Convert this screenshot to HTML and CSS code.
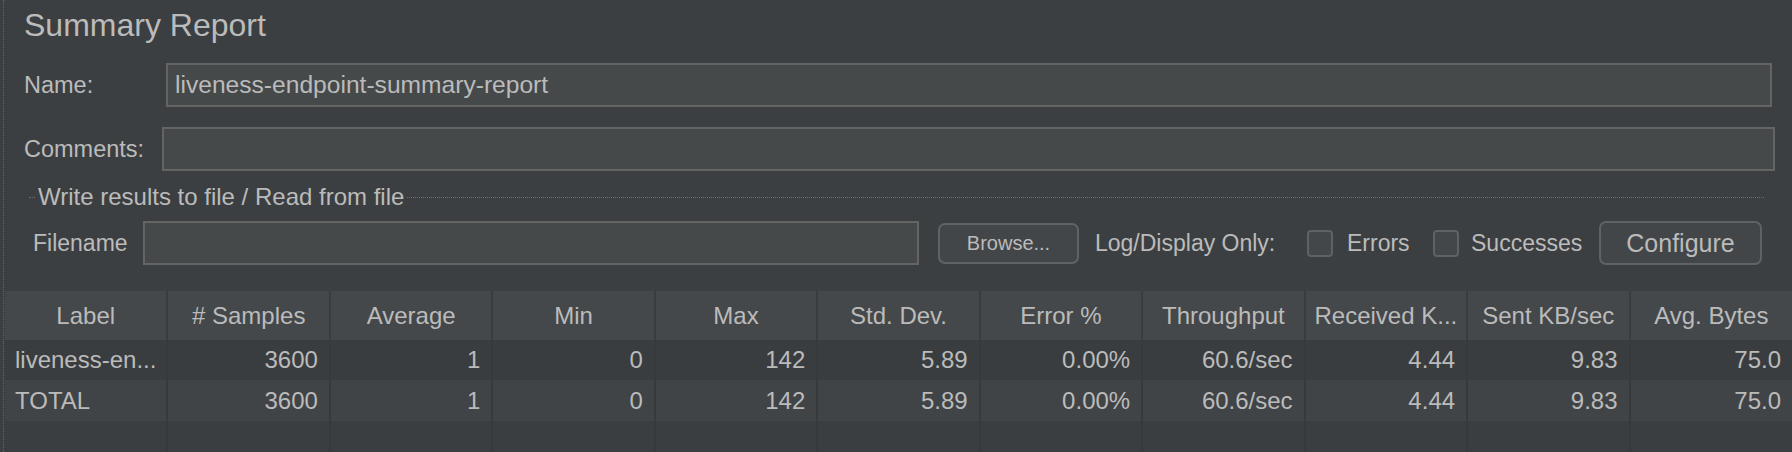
FILE: index.html
```html
<!DOCTYPE html>
<html lang="en">
<head>
<meta charset="utf-8">
<title>Summary Report</title>
<link rel="stylesheet" href="styles.css">
</head>
<body>
<div class="panel">
  <h1 class="title">Summary Report</h1>

  <div class="form-row row-name">
    <label class="row-label label-name" for="name">Name:</label>
    <input class="text-field field-name" id="name" type="text" value="liveness-endpoint-summary-report">
  </div>

  <div class="form-row row-comments">
    <label class="row-label label-comments" for="comments">Comments:</label>
    <input class="text-field field-comments" id="comments" type="text" value="">
  </div>

  <div class="group">
    <div class="group-title">
      <span class="group-line group-line-lead"></span>
      <span class="group-text">Write results to file / Read from file</span>
      <span class="group-line group-line-tail"></span>
    </div>
    <div class="file-row">
      <label class="file-label" for="filename">Filename</label>
      <input class="text-field field-file" id="filename" type="text" value="">
      <button class="btn btn-browse" type="button">Browse...</button>
      <span class="log-label">Log/Display Only:</span>
      <label class="check check-errors">
        <input class="check-box" type="checkbox">
        <span class="check-text text-errors">Errors</span>
      </label>
      <label class="check check-success">
        <input class="check-box" type="checkbox">
        <span class="check-text text-success">Successes</span>
      </label>
      <button class="btn btn-configure" type="button">Configure</button>
    </div>
  </div>

  <table class="results">
    <thead>
      <tr>
        <th>Label</th>
        <th># Samples</th>
        <th>Average</th>
        <th>Min</th>
        <th>Max</th>
        <th>Std. Dev.</th>
        <th>Error %</th>
        <th>Throughput</th>
        <th>Received K...</th>
        <th>Sent KB/sec</th>
        <th>Avg. Bytes</th>
      </tr>
    </thead>
    <tbody>
      <tr class="row-odd">
        <td class="cell-label">liveness-en...</td>
        <td>3600</td>
        <td>1</td>
        <td>0</td>
        <td>142</td>
        <td>5.89</td>
        <td>0.00%</td>
        <td>60.6/sec</td>
        <td>4.44</td>
        <td>9.83</td>
        <td>75.0</td>
      </tr>
      <tr class="row-even">
        <td class="cell-label">TOTAL</td>
        <td>3600</td>
        <td>1</td>
        <td>0</td>
        <td>142</td>
        <td>5.89</td>
        <td>0.00%</td>
        <td>60.6/sec</td>
        <td>4.44</td>
        <td>9.83</td>
        <td>75.0</td>
      </tr>
      <tr class="row-filler">
        <td></td><td></td><td></td><td></td><td></td><td></td><td></td><td></td><td></td><td></td><td></td>
      </tr>
    </tbody>
  </table>
</div>
</body>
</html>
```

FILE: styles.css
```css
html, body {
  margin: 0;
  padding: 0;
}

body {
  width: 1792px;
  height: 452px;
  overflow: hidden;
  background: #3c3f41;
  color: #bbbbbb;
  font-family: "Liberation Sans", Arial, Helvetica, sans-serif;
  font-size: 24px;
}

.panel {
  margin-left: 3px;
  height: 452px;
  border-left: 1px dotted #626567;
  box-sizing: border-box;
}

.title {
  margin: 0;
  padding: 7px 0 0 20px;
  height: 43px;
  box-sizing: border-box;
  font-size: 32px;
  line-height: 36px;
  font-weight: normal;
  color: #bbbbbb;
}

.form-row {
  display: flex;
  align-items: center;
  height: 44px;
  margin-top: 20px;
  padding-left: 20px;
}

.row-label {
  flex: 0 0 auto;
  font-size: 23.5px;
  line-height: 28px;
}

.label-name {
  width: 142px;
}

.label-comments {
  width: 138px;
}

.text-field {
  box-sizing: border-box;
  height: 44px;
  margin: 0;
  padding: 0 0 0 7px;
  background: #45494a;
  border: 2px solid #646464;
  border-radius: 0;
  color: #bbbbbb;
  font-family: inherit;
  font-size: 24.6px;
  outline: none;
}

.field-name {
  width: 1606px;
}

.field-comments {
  width: 1613px;
}

.group {
  margin-top: 14px;
}

.group-title {
  display: flex;
  align-items: center;
  height: 24px;
  padding-left: 25px;
}

.group-line {
  height: 0;
  border-top: 1px dotted #6b6e70;
}

.group-line-lead {
  width: 6px;
}

.group-line-tail {
  width: 1357px;
}

.group-text {
  padding: 0 3px;
  font-size: 24px;
  line-height: 24px;
}

.file-row {
  display: flex;
  align-items: center;
  height: 44px;
  margin-top: 12px;
  padding-left: 29px;
  font-size: 23px;
}

.file-label {
  width: 110px;
  flex: 0 0 auto;
}

.field-file {
  width: 776px;
  flex: 0 0 auto;
}

.btn {
  box-sizing: border-box;
  margin: 0;
  padding: 0;
  background: #434649;
  border: 2px solid #606366;
  border-radius: 7px;
  color: #bbbbbb;
  font-family: inherit;
  flex: 0 0 auto;
}

.btn-browse {
  width: 141px;
  height: 41px;
  margin-left: 19px;
  font-size: 20px;
}

.btn-configure {
  width: 163px;
  height: 44px;
  margin-left: 15px;
  font-size: 25px;
}

.log-label {
  flex: 0 0 auto;
  margin-left: 16px;
  width: 188px;
  white-space: nowrap;
}

.check {
  display: flex;
  align-items: center;
  flex: 0 0 auto;
}

.check-errors {
  margin-left: 24px;
}

.check-success {
  margin-left: 24px;
}

.check-box {
  appearance: none;
  -webkit-appearance: none;
  box-sizing: border-box;
  width: 26px;
  height: 27px;
  margin: 0 14px 0 0;
  background: #43474a;
  border: 2px solid #5f6264;
  border-radius: 4px;
}

.check-success .check-box {
  margin-right: 12px;
}

.check-text {
  white-space: nowrap;
}

.text-errors {
  width: 62px;
}

.text-success {
  width: 113px;
}

.results {
  margin-top: 26px;
  margin-left: 1px;
  width: 1787px;
  table-layout: fixed;
  border-collapse: collapse;
  border-spacing: 0;
  font-size: 24px;
}

.results th {
  height: 49px;
  padding: 0 4px;
  background: #45484a;
  border-right: 2px solid #3a3d3f;
  font-weight: normal;
  text-align: center;
  white-space: nowrap;
  overflow: hidden;
  color: #bbbbbb;
}

.results td {
  padding: 0 11px 0 10px;
  border-right: 2px solid #37393b;
  text-align: right;
  white-space: nowrap;
  overflow: hidden;
  color: #bbbbbb;
}

.results th:last-child,
.results td:last-child {
  border-right: none;
}

.results td.cell-label {
  text-align: left;
}

.row-odd td {
  height: 40px;
  background: #3a3d3f;
}

.row-even td {
  height: 41px;
  background: #414446;
}

.row-filler td {
  height: 31px;
  background: #3b3e40;
}
```
